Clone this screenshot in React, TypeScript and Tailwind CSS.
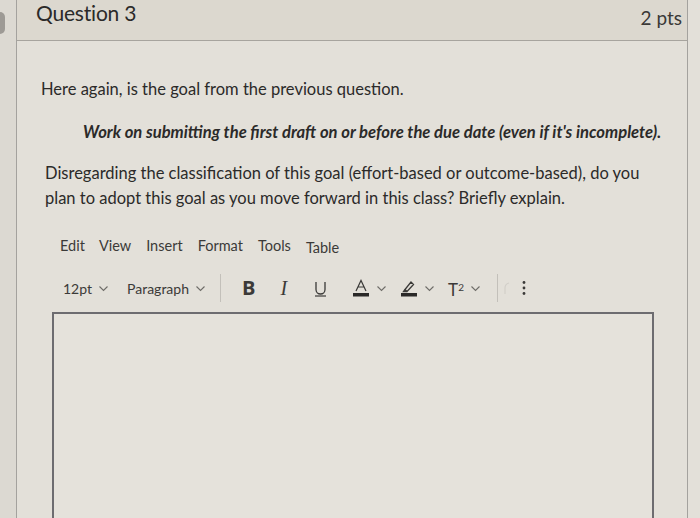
import React from 'react';

const font = { fontFamily: 'Lato, "Open Sans", sans-serif' };

function Chevron() {
  return (
    <svg width="11" height="10" viewBox="0 0 11 10" className="ml-[6px] text-[#6f6d69]">
      <path d="M1.5 3.5 L5.5 7.5 L9.5 3.5" fill="none" stroke="currentColor" strokeWidth="1.1" />
    </svg>
  );
}

export default function App() {
  return (
    <div className="w-[700px] h-[518px] overflow-hidden flex bg-[#e3e0d9] text-[#2b2a29]" style={font}>
      {/* strip left of the card */}
      <div className="w-[16px] shrink-0 bg-[#dcd9d2] flex flex-col">
        <div className="h-[22px] w-[5px] mt-[12px] rounded-r-full bg-[#9d9a95]" />
      </div>

      <div className="w-[672px] shrink-0 border-l border-r border-[#a4a29e] flex flex-col">
        {/* ── Header ── */}
        <div className="h-[41px] shrink-0 bg-[#dcd8cf] border-b border-[#a7a49e] flex items-start justify-between pl-[19px] pr-[5px]">
          <h1 className="text-[21px] leading-[26px] tracking-[-0.2px]">Question 3</h1>
          <span className="text-[19px] leading-[26px] mt-[5px] text-[#3a3937]">2 pts</span>
        </div>

        {/* ── Question text ── */}
        <div className="pl-[24px] pr-[16px] pt-[36px]">
          <p className="text-[16.5px] leading-[24px]">Here again, is the goal from the previous question.</p>
          <p className="text-[16.6px] leading-[24px] font-bold italic mt-[19px] pl-[42px] whitespace-nowrap">
            Work on submitting the first draft on or before the due date (even if it's incomplete).
          </p>
          <p className="text-[16.5px] leading-[25px] mt-[17px] pl-[4px] w-[610px]">
            Disregarding the classification of this goal (effort-based or outcome-based), do you plan to adopt this
            goal as you move forward in this class? Briefly explain.
          </p>
        </div>

        {/* ── Editor ── */}
        <div className="pl-[35px] pr-[33px] mt-[22px] flex flex-col flex-1">
          <div className="flex items-center gap-[15px] pl-[8px] text-[14.5px] leading-[20px] text-[#3b3a38]">
            <span className="-mr-[1px]">Edit</span>
            <span>View</span>
            <span>Insert</span>
            <span>Format</span>
            <span>Tools</span>
            <span className="mt-[5px]">Table</span>
          </div>

          <div className="flex items-center h-[32px] mt-[14px] pl-[11px] text-[14px] text-[#3b3a38]">
            <span className="flex items-center">12pt<Chevron /></span>
            <span className="flex items-center ml-[18px]">Paragraph<Chevron /></span>
            <div className="w-px h-[28px] bg-[#c3c0ba] ml-[14px]" />
            <span className="ml-[21px] text-[20px] font-bold" style={{ fontFamily: '"Open Sans", sans-serif' }}>B</span>
            <span className="ml-[25px] text-[20px] italic font-light" style={{ fontFamily: '"Liberation Serif", serif' }}>I</span>
            <span className="ml-[27px] flex flex-col items-center">
              <svg width="13" height="17" viewBox="0 0 13 17">
                <path d="M2 2 V9.5 A4.5 4.5 0 0 0 11 9.5 V2" fill="none" stroke="#3b3a38" strokeWidth="1.3" />
                <path d="M1 16 H12" stroke="#3b3a38" strokeWidth="1.2" />
              </svg>
            </span>
            <span className="ml-[25px] flex items-center">
              <svg width="18" height="18" viewBox="0 0 18 18">
                <path d="M4 12 L9 1.5 L14 12 M6 8 H12" fill="none" stroke="#3b3a38" strokeWidth="1.2" />
                <rect x="1" y="14" width="16" height="3.5" fill="#2a2928" />
              </svg>
              <Chevron />
            </span>
            <span className="ml-[13px] flex items-center">
              <svg width="18" height="18" viewBox="0 0 18 18">
                <path d="M5 10.5 L11 3 L13.5 5.5 L7 12.5 Z M5 10.5 L3.5 12.5 L7 12.5" fill="none" stroke="#3b3a38" strokeWidth="1.3" />
                <rect x="1" y="14" width="16" height="3.5" fill="#2a2928" />
              </svg>
              <Chevron />
            </span>
            <span className="ml-[13px] flex items-center">
              <span className="text-[17px] leading-[20px] text-[#3b3a38] mt-[4px]">T<sup className="text-[10px]">2</sup></span>
              <Chevron />
            </span>
            <div className="w-px h-[28px] bg-[#c3c0ba] ml-[16px]" />
            <svg width="8" height="14" viewBox="0 0 8 14" className="ml-[5px]">
              <path d="M6 2 Q2 3 2 7 L2 13" fill="none" stroke="#d2cfc9" strokeWidth="1.2" />
            </svg>
            <svg width="4" height="16" viewBox="0 0 4 16" className="ml-[11px]">
              <circle cx="2" cy="2.5" r="1.4" fill="#3b3a38" />
              <circle cx="2" cy="8" r="1.4" fill="#3b3a38" />
              <circle cx="2" cy="13.5" r="1.4" fill="#3b3a38" />
            </svg>
          </div>

          <div className="mt-[8px] flex-1 border-2 border-b-0 border-[#6d6c70] bg-[#e5e2db]" />
        </div>
      </div>
    </div>
  );
}
